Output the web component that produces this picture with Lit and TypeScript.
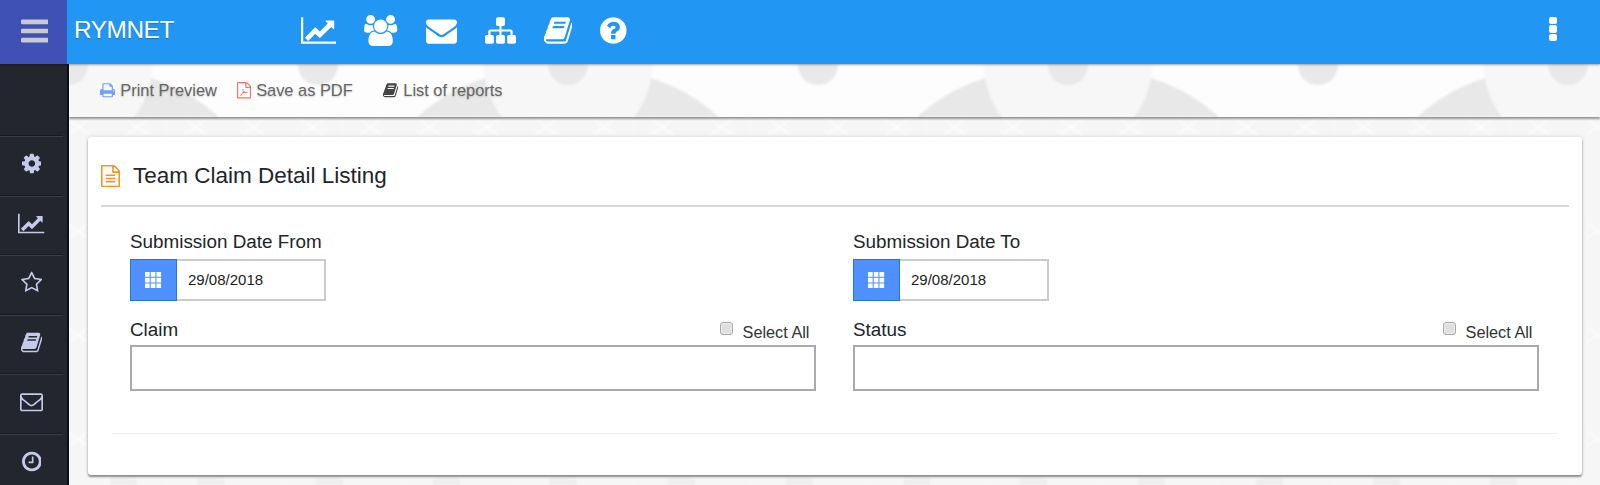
import { LitElement, html, css, svg } from "lit";
import { customElement } from "lit/decorators.js";

type Ic = { d: string; x?: number; w?: number };

const icon = (ic: Ic, scale: number) => {
  const x = ic.x ?? 0;
  const w = ic.w ?? 1792;
  return html`<svg viewBox="${x} 0 ${w} 1792" fill="currentColor" style="width:${w * scale}px;height:${1792 * scale}px"><path d=${ic.d}></path></svg>`;
};

const I: Record<string, Ic> = {
  chart: { w: 2048, d: "M2048 1536v128H0V128h128v1408h1920zM1920 352v435q0 21-19.500 29.500T1865 809l-121-121-633 633q-10 10-23 10t-23-10l-233-233-416 416-192-192 585-585q10-10 23-10t23 10l233 233 464-464-121-121q-16-16-7.500-35.500T1453 320h435q14 0 23 9t9 23z" },
  users: { w: 1920, d: "M593 896q-162 5-265 128H194q-82 0-138-40.500T0 865q0-353 124-353 6 0 43.500 21t97.500 42.500T384 597q67 0 133-23-5 37-5 66 0 139 81 256zm1071 637q0 120-73 189.500t-194 69.500H523q-121 0-194-69.500T256 1533q0-53 3.500-103.500t14-109T300 1212t43-97.500 62-81 85.500-53.500T602 960q10 0 43 21.500t73 48 107 48 135 21.500 135-21.500 107-48 73-48 43-21.500q61 0 111.500 20t85.500 53.500 62 81 43 97.500 26.500 108.500 14 109 3.500 103.500zM640 256q0 106-75 181t-181 75-181-75-75-181 75-181 181-75 181 75 75 181zm704 384q0 159-112.500 271.500T960 1024 688.500 911.500 576 640t112.500-271.500T960 256t271.500 112.500T1344 640zm576 225q0 78-56 118.500t-138 40.500h-134q-103-123-265-128 81-117 81-256 0-29-5-66 66 23 133 23 59 0 119-21.500t97.500-42.500 43.500-21q124 0 124 353zm-128-609q0 106-75 181t-181 75-181-75-75-181 75-181 181-75 181 75 75 181z" },
  env: { d: "M1792 710v794q0 66-47 113t-113 47H160q-66 0-113-47T0 1504V710q44 49 101 87 362 246 497 345 57 42 92.500 65.500t94.500 48 110 24.500h2q51 0 110-24.500t94.500-48 92.500-65.500q170-123 498-345 57-39 100-87zm0-294q0 79-49 151t-122 123q-376 261-468 325-10 7-42.500 30.500t-54 38-52 32.500-57.500 27-50 9h-2q-23 0-50-9t-57.500-27-52-32.500-54-38T639 1015q-91-64-262-182.500T172 690q-62-42-117-115.500T0 438q0-78 41.500-130T160 256h1472q65 0 112.500 47t47.500 113z" },
  envO: { d: "M1664 1504V736q-32 36-69 66-268 206-426 338-51 43-83 67t-86.500 48.500T897 1280h-2q-48 0-102.500-24.500T706 1207t-83-67q-158-132-426-338-37-30-69-66v768q0 13 9.500 22.500t22.500 9.500h1472q13 0 22.500-9.500t9.500-22.500zm0-1051v-24.500l-.500-13-3-12.500-5.500-9-9-7.500-14-2.500H160q-13 0-22.500 9.500T128 416q0 168 147 284 193 152 401 317 6 5 35 29.500t46 37.500 44.500 31.500T852 1143t43 9h2q20 0 43-9t50.500-27.500 44.500-31.500 46-37.500 35-29.500q208-165 401-317 54-43 100.500-115.500T1664 453zm128-37v1088q0 66-47 113t-113 47H160q-66 0-113-47T0 1504V416q0-66 47-113t113-47h1472q66 0 113 47t47 113z" },
  sitemap: { d: "M1792 1248v320q0 40-28 68t-68 28h-320q-40 0-68-28t-28-68v-320q0-40 28-68t68-28h96V960H960v192h96q40 0 68 28t28 68v320q0 40-28 68t-68 28H736q-40 0-68-28t-28-68v-320q0-40 28-68t68-28h96V960H320v192h96q40 0 68 28t28 68v320q0 40-28 68t-68 28H96q-40 0-68-28t-28-68v-320q0-40 28-68t68-28h96V960q0-52 38-90t90-38h512V640h-96q-40 0-68-28t-28-68V224q0-40 28-68t68-28h320q40 0 68 28t28 68v320q0 40-28 68t-68 28h-96v192h512q52 0 90 38t38 90v192h96q40 0 68 28t28 68z" },
  book: { x: 70, w: 1660, d: "M1703 478q40 57 18 129l-275 906q-19 64-76.500 107.500T1247 1664H324q-77 0-148.500-53.500T76 1479q-24-67-2-127 0-4 3-27t4-37q1-8-3-21.500t-3-19.500q2-11 8-21t16.500-23.500T116 1179q23-38 45-91.500t30-91.500q3-10 .5-30t-.5-28q3-11 17-28t17-23q21-36 42-92t25-90q1-9-2.500-32t.5-28q4-13 22-30.500t22-22.500q19-26 42.500-84.500T404 411q1-8-3-25.500t-2-26.500q2-8 9-18t18-23 17-21q8-12 16.500-30.500t15-35 16-36 19.500-32 26.500-23.500 36-11.500T620 133l-1 3q38-9 51-9h761q74 0 114 56t18 130l-274 906q-36 119-71.500 153.500T1089 1407H220q-27 0-38 15-11 16-1 43 24 70 144 70h923q29 0 56-15.500t35-41.500l300-987q7-22 5-57 38 15 59 43zm-1064 2q-4 13 2 22.500t20 9.500h608q13 0 25.500-9.500T1311 480l21-64q4-13-2-22.500t-20-9.500H702q-13 0-25.500 9.500T660 416zm-83 256q-4 13 2 22.500t20 9.500h608q13 0 25.500-9.500T1228 736l21-64q4-13-2-22.500t-20-9.500H619q-13 0-25.500 9.500T577 672z" },
  question: { x: 128, w: 1536, d: "M1024 1376v-192q0-14-9-23t-23-9H800q-14 0-23 9t-9 23v192q0 14 9 23t23 9h192q14 0 23-9t9-23zm256-672q0-88-55.500-163T1086 425t-170-41q-243 0-371 213-15 24 8 42l132 100q7 6 19 6 16 0 25-12 53-68 86-92 34-24 86-24 48 0 85.500 26t37.500 59q0 38-20 61t-68 45q-63 28-115.500 86.500T768 1020v36q0 14 9 23t23 9h192q14 0 23-9t9-23q0-19 21.500-49.500T1100 957q32-18 49-28.500t46-35 44.500-48 28-60.500 12.500-81zm384 192q0 209-103 385.500T1281.500 1561 896 1664t-385.500-103T231 1281.500 128 896t103-385.500T510.500 231 896 128t385.500 103T1561 510.500 1664 896z" },
  bars: { x: 128, w: 1536, d: "M1664 1344v128q0 26-19 45t-45 19H192q-26 0-45-19t-19-45v-128q0-26 19-45t45-19h1408q26 0 45 19t19 45zm0-512v128q0 26-19 45t-45 19H192q-26 0-45-19t-19-45V832q0-26 19-45t45-19h1408q26 0 45 19t19 45zm0-512v128q0 26-19 45t-45 19H192q-26 0-45-19t-19-45V320q0-26 19-45t45-19h1408q26 0 45 19t19 45z" },
  cog: { x: 128, w: 1536, d: "M1152 896q0-106-75-181t-181-75-181 75-75 181 75 181 181 75 181-75 75-181zm512-109v222q0 12-8 23t-20 13l-185 28q-19 54-39 91 35 50 107 138 10 12 10 25t-9 23q-27 37-99 108t-94 71q-12 0-26-9l-138-108q-44 23-91 38-16 136-29 186-7 28-36 28H785q-14 0-24.500-8.500T749 1634l-28-184q-49-16-90-37l-141 107q-10 9-25 9-14 0-25-11-126-114-165-168-7-10-7-23 0-12 8-23 15-21 51-66.500t54-70.500q-27-50-41-99l-183-27q-13-2-21-12.500t-8-23.500V783q0-12 8-23t19-13l186-28q14-46 39-92-40-57-107-138-10-12-10-24 0-10 9-23 26-36 98.500-107.500T465 263q13 0 26 10l138 107q44-23 91-38 16-136 29-186 7-28 36-28h222q14 0 24.500 8.500T1043 158l28 184q49 16 90 37l142-107q9-9 24-9 13 0 25 10 129 119 165 170 7 8 7 22 0 12-8 23-15 21-51 66.500t-54 70.500q26 50 41 98l183 28q13 2 21 12.500t8 23.500z" },
  star: { x: 64, w: 1664, d: "M1201 1004l306-297-422-62-189-382-189 382-422 62 306 297-73 421 378-199 377 199zm527-357q0 22-26 48l-363 354 86 500q1 7 1 20 0 50-41 50-19 0-40-12l-449-236-449 236q-22 12-40 12-21 0-31.500-14.500T365 1569q0-6 2-20l86-500L89 695q-25-27-25-48 0-37 56-46l502-73L847 73q19-41 49-41t49 41l225 455 502 73q56 9 56 46z" },
  clock: { x: 128, w: 1536, d: "M1024 544v448q0 14-9 23t-23 9H672q-14 0-23-9t-9-23v-64q0-14 9-23t23-9h224V544q0-14 9-23t23-9h64q14 0 23 9t9 23zm416 352q0-148-73-273t-198-198-273-73-273 73-198 198-73 273 73 273 198 198 273 73 273-73 198-198 73-273zm224 0q0 209-103 385.500T1281.500 1561 896 1664t-385.500-103T231 1281.500 128 896t103-385.500T510.500 231 896 128t385.500 103T1561 510.500 1664 896z" },
  print: { x: 64, w: 1664, d: "M448 1536h896v-256H448v256zm0-640h896V512h-160q-40 0-68-28t-28-68V256H448v640zm1152 64q0-26-19-45t-45-19-45 19-19 45 19 45 45 19 45-19 19-45zm128 0v416q0 13-9.500 22.500T1696 1408h-224v160q0 40-28 68t-68 28H416q-40 0-68-28t-28-68v-160H96q-13 0-22.500-9.500T64 1376V960q0-79 56.500-135.500T256 768h64V224q0-40 28-68t68-28h672q40 0 88 20t76 48l152 152q28 28 48 76t20 88v256h64q79 0 135.500 56.500T1728 960z" },
  pdf: { x: 128, w: 1536, d: "M1596 380q28 28 48 76t20 88v1152q0 40-28 68t-68 28H224q-40 0-68-28t-28-68V96q0-40 28-68t68-28h896q40 0 88 20t76 48zm-444-244v376h376q-10-29-22-41l-313-313q-12-12-41-22zm384 1528V640h-416q-40 0-68-28t-28-68V128H256v1536h1280zm-514-593q25 20 64 46 58-7 107-7 97 0 126 32 15 15 13 34-1 13-12 26-19 25-60 25-50 0-120-21-45-14-91-36-139 15-272 59-117 203-187 258-23 20-46 20-15 0-29-8-32-16-32-49 0-13 5-22 16-49 70-97 39-35 122-79 50-90 99-195-40-76-57-151-17-58 1-100 11-28 33-28h24q19 0 31 23 9 14 5 48-2 20-10 56-2 11-2 12 19 56 76 102z" },
  fileText: { x: 128, w: 1536, d: "M1596 380q28 28 48 76t20 88v1152q0 40-28 68t-68 28H224q-40 0-68-28t-28-68V96q0-40 28-68t68-28h896q40 0 88 20t76 48zm-444-244v376h376q-10-29-22-41l-313-313q-12-12-41-22zm384 1528V640h-416q-40 0-68-28t-28-68V128H256v1536h1280zM512 800q0-14 9-23t23-9h704q14 0 23 9t9 23v64q0 14-9 23t-23 9H544q-14 0-23-9t-9-23v-64zm736 224q14 0 23 9t9 23v64q0 14-9 23t-23 9H544q-14 0-23-9t-9-23v-64q0-14 9-23t23-9h704zm0 256q14 0 23 9t9 23v64q0 14-9 23t-23 9H544q-14 0-23-9t-9-23v-64q0-14 9-23t23-9h704z" },
  grid: { d: "M0 0h520v520H0zM636 0h520v520H636zM1272 0h520v520h-520zM0 636h520v520H0zM636 636h520v520H636zM1272 636h520v520h-520zM0 1272h520v520H0zM636 1272h520v520H636zM1272 1272h520v520h-520z" },
};

// Decoration coordinates are page x minus 69 (the sidebar), page y minus 64 (the top bar).
const DISCS = [-1, 499, 999, 1499];
const SMALL = [-1, 249, 499, 749, 999, 1249, 1499];
const BLOBS = [41, 129, 247, 364, 481, 599, 717, 834, 951, 1069, 1187, 1304, 1421];

@customElement("date-field")
class DateField extends LitElement {
  static properties = { label: {} };
  label = "";
  static styles = css`
    :host { display: block; }
    .lab { font-size: 18.850px; line-height: 26px; color: #212529; height: 30px; }
    .box { display: flex; width: 196px; height: 42px; box-sizing: border-box; border: 2px solid #ccc; border-left: 0; background: #fff; }
    .btn { width: 47px; margin: -2px 0; flex: none; background: #4d90fe; border: 1px solid #2a75c9; box-sizing: border-box; color: #fff; display: flex; align-items: center; justify-content: center; }
    .btn svg { display: block; }
    .val { padding-left: 11px; font-size: 15px; line-height: 38px; color: #222; }
  `;
  render() {
    return html`<div class="lab">${this.label}</div>
      <div class="box"><div class="btn">${icon(I.grid, 0.009)}</div><div class="val">29/08/2018</div></div>`;
  }
}

@customElement("multi-field")
class MultiField extends LitElement {
  static properties = { label: {} };
  label = "";
  static styles = css`
    :host { display: block; }
    .head { display: flex; justify-content: space-between; height: 25px; padding-right: 6px; }
    .lab { font-size: 18.850px; line-height: 20px; color: #212529; }
    .sel { display: flex; align-items: flex-start; font-size: 16.300px; color: #333; line-height: 24px; }
    .chk { width: 13px; height: 13px; margin: 2px 10px 0 0; box-sizing: border-box; border: 1px solid #a9a9a9; border-radius: 3px; background: #e0e0e0; box-shadow: inset 0 0 0 1px #ececec; }
    .box { height: 46px; box-sizing: border-box; border: 2px solid #aaa; background: #fff; }
  `;
  render() {
    return html`<div class="head"><div class="lab">${this.label}</div>
      <div class="sel"><div class="chk"></div><div>Select All</div></div></div>
      <div class="box"></div>`;
  }
}

@customElement("app-root")
class AppRoot extends LitElement {
  static styles = css`
    :host { display: block; width: 1600px; height: 485px; overflow: hidden; position: relative; font-family: "Liberation Sans", Arial, sans-serif; background: #f6f6f6; }
    svg { display: block; }
    .top { display: flex; height: 64px; background: #2196f3; box-shadow: 0 1px 2px rgba(0,0,0,.35); position: relative; z-index: 3; color: #fff; }
    .burger { flex: none; width: 67px; padding: 0 0 2px 2px; box-sizing: border-box; background: #3f51b5; display: flex; align-items: center; justify-content: center; color: #cbcbcb; }
    .brand { flex: none; padding-left: 7px; box-sizing: border-box; width: 234px; font-size: 24.400px; letter-spacing: -0.45px; line-height: 60px; text-shadow: 0 1px 1px rgba(0,0,0,.2); }
    .nav { display: flex; align-items: center; flex: 1; gap: 28px; padding-bottom: 3px; }
    .dots { flex: none; margin-right: 43px; display: flex; flex-direction: column; gap: 1px; padding-top: 17px; }
    .dots i { display: block; width: 8px; height: 7.300px; border-radius: 2px; background: #fff; }
    .body { display: flex; height: 421px; }
    .side { width: 69px; flex: none; background: #23262e; border-right: 2px solid #0e0f12; box-sizing: border-box; display: flex; flex-direction: column; padding: 71px 4px 0 0; color: #c5cae9; }
    .cell { height: 59.500px; flex: none; padding-bottom: 3px; border-top: 1px solid #17191e; box-shadow: inset 0 1px 0 #3a3d45; box-sizing: border-box; display: flex; align-items: center; justify-content: center; }
    .main { flex: 1; position: relative; min-width: 0; }
    .bg { position: absolute; inset: 0; overflow: hidden; }
    .bg svg { width: 100%; height: 100%; filter: blur(0.8px); }
    .tools { position: relative; height: 53px; box-sizing: border-box; display: flex; align-items: center; padding-left: 31px; font-size: 16.400px; color: #666; box-shadow: 0 2px 2px rgba(0,0,0,.4); }
    .tool { display: flex; align-items: center; gap: 5px; flex: none; text-shadow: 0 1px 2px rgba(0,0,0,.2); }
    .t1 { width: 137px; }
    .t1 svg { color: #6ea2f8; }
    .t2 { width: 146px; }
    .t2 svg { color: #f2735f; }
    .t3 svg { color: #444; }
    .card { position: relative; margin: 20px 18px 0 19px; height: 338px; background: #fff; border-radius: 3px; box-shadow: 0 2px 2px rgba(0,0,0,.4), 0 0 4px rgba(0,0,0,.14); box-sizing: border-box; padding: 0 13px; }
    .title { display: flex; align-items: center; height: 70px; padding-top: 10px; box-sizing: border-box; border-bottom: 2px solid #d9d9d9; font-size: 22.500px; color: #212529; gap: 13px; }
    .title svg { color: #f7931e; }
    .grid { display: grid; grid-template-columns: 685.500px 685.500px; column-gap: 37.500px; padding: 0 0 0 29px; }
    .grid date-field { margin-top: 22px; }
    .grid multi-field { margin-top: 19px; }
    .sep { margin: 42px 12px 0 11px; border-top: 1px solid #eee; }
  `;
  render() {
    return html`
      <div class="top">
        <div class="burger">${icon(I.bars, 32 / 1792)}</div>
        <div class="brand">RYMNET</div>
        <div class="nav">
          ${[I.chart, I.users, I.env, I.sitemap, I.book, I.question].map((d) => icon(d, 31 / 1792))}
        </div>
        <div class="dots"><i></i><i></i><i></i></div>
      </div>
      <div class="body">
        <div class="side">
          ${[I.cog, I.chart, I.star, I.book, I.envO, I.clock].map((d) => html`<div class="cell">${icon(d, 23 / 1792)}</div>`)}
        </div>
        <div class="main">
          <div class="bg">
            <svg viewBox="0 0 1531 421">
              <defs>
                <pattern id="tile" width="58.400" height="104" x="39" y="11" patternUnits="userSpaceOnUse">
                  <rect width="58.400" height="104" fill="#f6f6f6"></rect>
                  <g stroke="#fff" fill="none">
                    <path d="M18 44 L40 60 M40 44 L18 60" stroke-width="1.500"></path>
                    <path d="M0 0 V104" stroke-width="1.200" opacity=".45"></path>
                  </g>
                </pattern>
                <clipPath id="barclip"><rect width="1531" height="53"></rect></clipPath>
              </defs>
              <rect width="1531" height="421" fill="url(#tile)"></rect>
              <g fill="#eeeeee">
                ${BLOBS.map((x) => svg`<rect x=${x} y="414" width="27" height="8" rx="3"></rect>`)}
              </g>
              <rect width="1531" height="53" fill="#fdfdfd"></rect>
              <g clip-path="url(#barclip)">
                <g fill="#e8e8e8">
                  ${DISCS.map((c) => svg`
                    <path d="M${c - 151} 53 Q${c - 118} 24 ${c - 82} 14 L${c - 40} 53Z"></path>
                    <path d="M${c + 151} 53 Q${c + 118} 24 ${c + 82} 14 L${c + 40} 53Z"></path>`)}
                </g>
                <g fill="#f7f7f7">
                  ${DISCS.map((c) => svg`<circle cx=${c} cy="1" r="84"></circle>`)}
                </g>
                <g fill="#e9e9e9">
                  ${SMALL.map((c) => svg`<circle cx=${c} cy="1" r="20"></circle>`)}
                </g>
              </g>
            </svg>
          </div>
          <div class="tools">
            <div class="tool t1">${icon(I.print, 0.0092)}<span>Print Preview</span></div>
            <div class="tool t2">${icon(I.pdf, 0.0092)}<span>Save as PDF</span></div>
            <div class="tool t3">${icon(I.book, 0.0092)}<span>List of reports</span></div>
          </div>
          <div class="card">
            <div class="title">${icon(I.fileText, 0.0124)}<span>Team Claim Detail Listing</span></div>
            <div class="grid">
              <date-field label="Submission Date From"></date-field>
              <date-field label="Submission Date To"></date-field>
              <multi-field label="Claim"></multi-field>
              <multi-field label="Status"></multi-field>
            </div>
            <div class="sep"></div>
          </div>
        </div>
      </div>
    `;
  }
}
